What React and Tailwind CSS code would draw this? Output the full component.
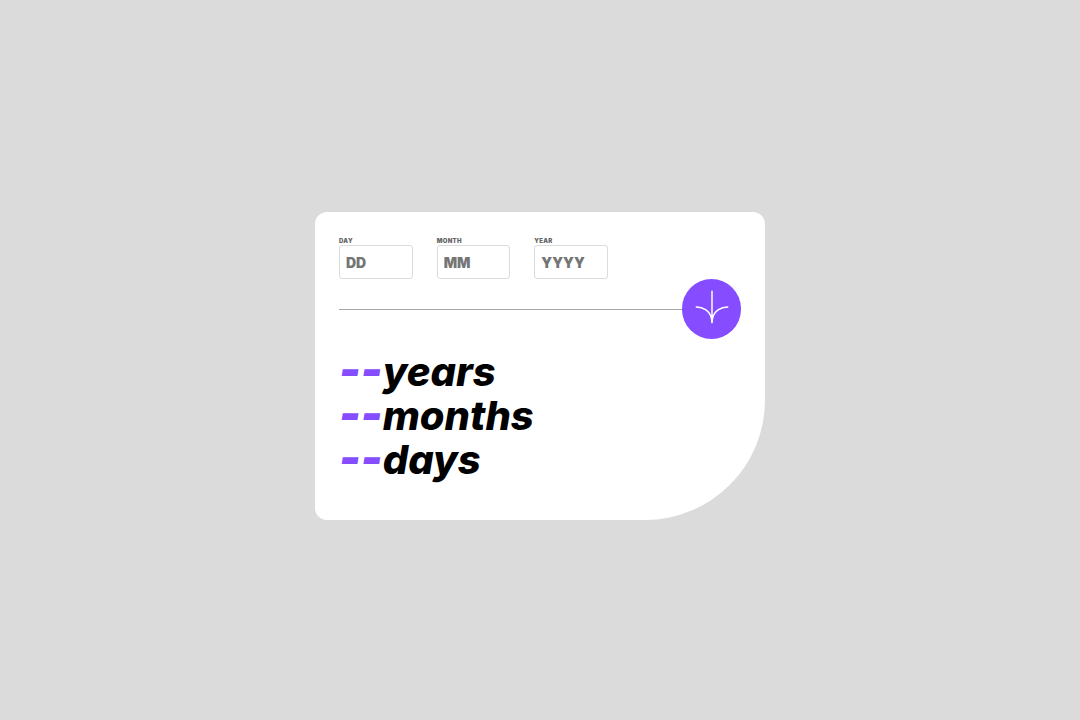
import { useState } from "react";

const fields = [
  { id: "day", label: "DAY", placeholder: "DD" },
  { id: "month", label: "MONTH", placeholder: "MM" },
  { id: "year", label: "YEAR", placeholder: "YYYY" },
];

const getAge = ({ day, month, year }) => {
  const birth = new Date(Number(year), Number(month) - 1, Number(day));
  const now = new Date();
  if (!day || !month || !year || isNaN(birth) || birth > now) return null;

  let years = now.getFullYear() - birth.getFullYear();
  let months = now.getMonth() - birth.getMonth();
  let days = now.getDate() - birth.getDate();

  if (days < 0) {
    months -= 1;
    days += new Date(now.getFullYear(), now.getMonth(), 0).getDate();
  }
  if (months < 0) {
    years -= 1;
    months += 12;
  }
  return { years, months, days };
};

export default function App() {
  const [date, setDate] = useState({ day: "", month: "", year: "" });
  const [age, setAge] = useState(null);

  const handleSubmit = (e) => {
    e.preventDefault();
    setAge(getAge(date));
  };

  return (
    <main className="flex min-h-screen items-center justify-center bg-[#dbdbdb] px-4 pt-3 font-['Inter',sans-serif] [font-feature-settings:'cv11']">
      <div className="w-full max-w-[450px] rounded-xl rounded-br-[120px] bg-white px-6 pt-6 pb-[41px]">
        <form onSubmit={handleSubmit}>
          <div className="grid max-w-[269px] grid-cols-3 gap-6">
            {fields.map(({ id, label, placeholder }) => (
              <div key={id} className="flex flex-col">
                <label htmlFor={id} className="text-[6px] leading-[9px] font-black tracking-wider text-[#666666]">
                  {label}
                </label>
                <input
                  id={id}
                  type="text"
                  inputMode="numeric"
                  placeholder={placeholder}
                  value={date[id]}
                  onChange={(e) => setDate({ ...date, [id]: e.target.value })}
                  className="h-[34px] w-full rounded-[3px] border border-[#dbdbdb] px-1.5 text-[14px] font-black outline-none placeholder:text-[#757575] focus:border-[#854dff]"
                />
              </div>
            ))}
          </div>

          {/* Divider and submit */}
          <div className="flex items-center">
            <div className="h-px flex-1 bg-[#a8a8a8]" />
            <button
              type="submit"
              aria-label="Calculate age"
              className="flex h-[60px] w-[59px] items-center justify-center rounded-full bg-[#854dff] pb-1"
            >
              <svg className="size-[34px]" viewBox="0 0 46 44" fill="none" stroke="#fff" strokeWidth="2">
                <path d="M1 22.019C8.333 21.686 23 25.616 23 44M23 44V0M45 22.019C37.667 21.686 23 25.616 23 44" />
              </svg>
            </button>
          </div>
        </form>

        {/* Result */}
        <div className="mt-2 text-[40px] leading-[44px] font-extrabold italic">
          {["years", "months", "days"].map((unit) => (
            <p key={unit} className="flex h-11 items-baseline">
              <span className="min-w-[43px] text-[46px] leading-[44px] font-black text-[#854dff]">
                {age ? age[unit] : "--"}
              </span>
              <span>{unit}</span>
            </p>
          ))}
        </div>
      </div>
    </main>
  );
}
